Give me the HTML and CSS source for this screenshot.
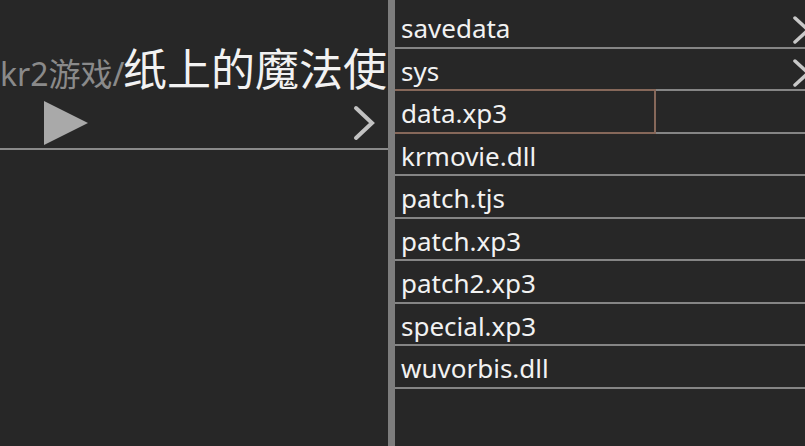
FILE: index.html
```html
<!DOCTYPE html>
<html>
<head>
<meta charset="utf-8">
<link rel="stylesheet" href="styles.css">
</head>
<body>
<div class="screen">
  <div class="left">
    <div class="path">
      <span class="path-parent">kr2游戏/</span><span class="path-current">纸上的魔法使</span>
    </div>
    <div class="controls">
      <svg class="play" width="44" height="44" viewBox="0 0 44 44"><polygon points="0,0 44,22 0,44" fill="#a9a9a9"/></svg>
      <svg class="next" width="22" height="36" viewBox="0 0 22 36"><polyline points="3,3 19,18 3,33" fill="none" stroke="#c2c2c2" stroke-width="4" stroke-linecap="round" stroke-linejoin="miter"/></svg>
    </div>
  </div>
  <div class="divider"></div>
  <div class="right">
    <div class="row"><span class="name">savedata</span><svg class="dir" width="22" height="30" viewBox="0 0 22 30"><polyline points="3,3 16,15 3,27" fill="none" stroke="#c8c8c8" stroke-width="3.5" stroke-linecap="round"/></svg></div>
    <div class="row"><span class="name">sys</span><svg class="dir" width="22" height="30" viewBox="0 0 22 30"><polyline points="3,3 16,15 3,27" fill="none" stroke="#c8c8c8" stroke-width="3.5" stroke-linecap="round"/></svg></div>
    <div class="row selected"><span class="name">data.xp3</span><span class="focus"></span></div>
    <div class="row"><span class="name">krmovie.dll</span></div>
    <div class="row"><span class="name">patch.tjs</span></div>
    <div class="row"><span class="name">patch.xp3</span></div>
    <div class="row"><span class="name">patch2.xp3</span></div>
    <div class="row"><span class="name">special.xp3</span></div>
    <div class="row"><span class="name">wuvorbis.dll</span></div>
  </div>
</div>
</body>
</html>
```
FILE: styles.css
```css
html, body {
  margin: 0;
  padding: 0;
  background: #272727;
}
.screen {
  width: 805px;
  height: 446px;
  display: flex;
  overflow: hidden;
  background: #272727;
  font-family: "Noto Sans", "Noto Sans CJK SC", sans-serif;
}
.left {
  width: 388px;
  flex: none;
  display: flex;
  flex-direction: column;
  overflow: hidden;
}
.path {
  height: 98px;
  display: flex;
  align-items: baseline;
  justify-content: flex-start;
  white-space: nowrap;
  box-sizing: border-box;
  padding-top: 42px;
  line-height: 50px;
  overflow: hidden;
}
.path-parent {
  flex: none;
  width: 123px;
  font-size: 32px;
  color: #8a8a8a;
  font-family: "Noto Sans", "Noto Sans CJK SC", sans-serif;
}
.path-current {
  flex: none;
  font-size: 44px;
  color: #f2f2f2;
  font-family: "Noto Sans CJK SC", sans-serif;
}
.controls {
  height: 50px;
  display: flex;
  align-items: center;
  justify-content: space-between;
  padding-left: 44px;
  padding-right: 13px;
  border-bottom: 2px solid #8a8a8a;
}
.play, .next {
  display: block;
}
.divider {
  width: 7px;
  flex: none;
  background: #7d7d7d;
}
.right {
  flex: 1;
  padding-top: 6px;
  overflow: hidden;
}
.row {
  position: relative;
  height: 40.5px;
  border-bottom: 2px solid #858585;
  display: flex;
  align-items: flex-start;
  justify-content: space-between;
  box-sizing: content-box;
}
.name {
  display: block;
  margin-left: 6px;
  padding-top: 5px;
  font-size: 26px;
  line-height: 34px;
  color: #f2f2f2;
}
.dir {
  display: block;
  margin-top: 9px;
  margin-right: -9px;
  flex: none;
}
.focus {
  position: absolute;
  left: -10px;
  top: -2px;
  bottom: -2px;
  width: 271px;
  box-sizing: border-box;
  border: 2px solid #86685a;
}
```
